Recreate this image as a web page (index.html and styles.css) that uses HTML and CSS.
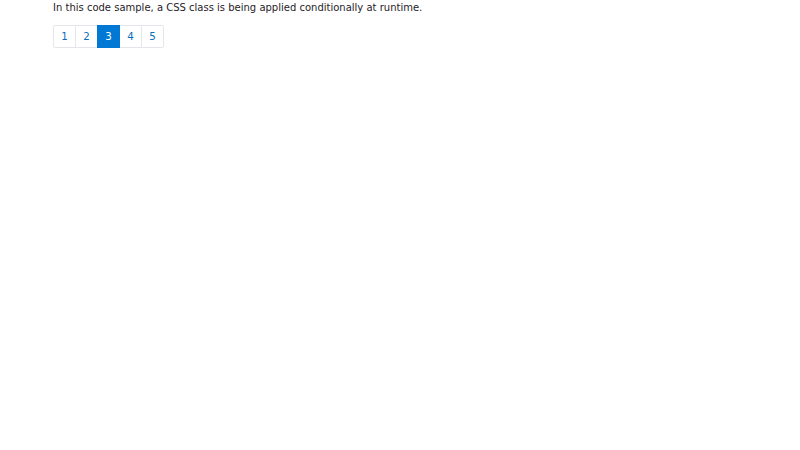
FILE: index.html
```html
<!DOCTYPE html>
<html>
<head>
<meta charset="utf-8">
<link rel="stylesheet" href="styles.css">
</head>
<body>
<div class="page">
  <p class="intro">In this code sample, a CSS class is being applied conditionally at runtime.</p>
  <ul class="pagination">
    <li class="page-item"><a class="page-link">1</a></li>
    <li class="page-item"><a class="page-link">2</a></li>
    <li class="page-item active"><a class="page-link">3</a></li>
    <li class="page-item"><a class="page-link">4</a></li>
    <li class="page-item"><a class="page-link">5</a></li>
  </ul>
</div>
</body>
</html>
```
FILE: styles.css
```css
html, body {
  margin: 0;
  padding: 0;
  background: #ffffff;
}
.page {
  padding: 0 53px;
  font-family: "DejaVu Sans", sans-serif;
  font-size: 10px;
  line-height: 15px;
  color: #1f2327;
}
.intro {
  margin: 0 0 10px 0;
}
.pagination {
  list-style: none;
  margin: 0;
  padding: 0;
  display: flex;
}
.page-item {
  display: block;
}
.page-link {
  display: block;
  width: 21px;
  height: 21px;
  line-height: 21px;
  text-align: center;
  font-size: 10.3px;
  color: #0a6ebd;
  border: 1px solid #e3e6ea;
  margin-left: -1px;
  background: #fff;
}
.page-item:first-child .page-link {
  margin-left: 0;
  border-radius: 2px 0 0 2px;
}
.page-item:last-child .page-link {
  border-radius: 0 2px 2px 0;
}
.page-item.active .page-link {
  background: #0078d4;
  border-color: #0078d4;
  color: #fff;
  position: relative;
  z-index: 1;
}
```
